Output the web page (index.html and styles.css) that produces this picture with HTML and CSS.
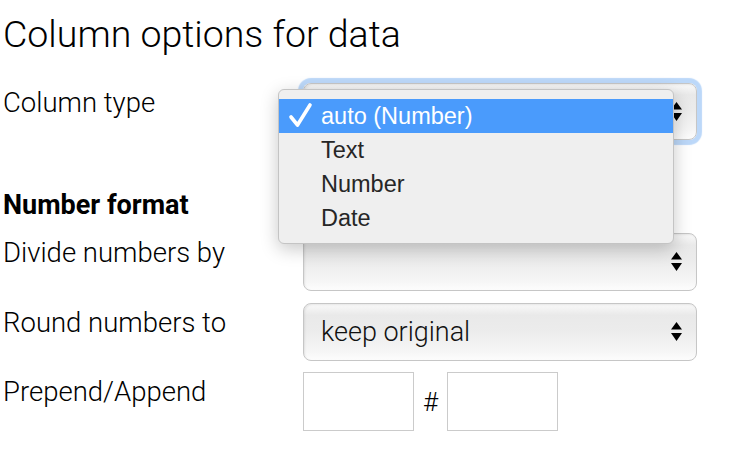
FILE: index.html
```html
<!DOCTYPE html>
<html>
<head>
<meta charset="utf-8">
<link rel="stylesheet" href="styles.css">
</head>
<body>
<div class="page">
  <h1 class="title">Column options for data</h1>
  <div class="row row-type">
    <div class="label">Column type</div>
    <div class="control">
      <div class="select focused">
        <span class="select-text"></span>
        <svg class="arrows" width="11" height="20" viewBox="0 0 11 20"><path d="M5.5 0 L11 7.5 L0 7.5 Z M0 11 L11 11 L5.5 19 Z" fill="#000"/></svg>
      </div>
    </div>
  </div>
  <div class="section">Number format</div>
  <div class="row row-divide">
    <div class="label">Divide numbers by</div>
    <div class="control">
      <div class="select">
        <span class="select-text"></span>
        <svg class="arrows" width="11" height="20" viewBox="0 0 11 20"><path d="M5.5 0 L11 7.5 L0 7.5 Z M0 11 L11 11 L5.5 19 Z" fill="#000"/></svg>
      </div>
    </div>
  </div>
  <div class="row row-round">
    <div class="label">Round numbers to</div>
    <div class="control">
      <div class="select">
        <span class="select-text">keep original</span>
        <svg class="arrows" width="11" height="20" viewBox="0 0 11 20"><path d="M5.5 0 L11 7.5 L0 7.5 Z M0 11 L11 11 L5.5 19 Z" fill="#000"/></svg>
      </div>
    </div>
  </div>
  <div class="row row-affix">
    <div class="label">Prepend/Append</div>
    <div class="control affix">
      <div class="input"></div>
      <span class="hash">#</span>
      <div class="input"></div>
    </div>
  </div>

  <div class="menu">
    <div class="item selected">
      <svg class="check" width="26" height="28" viewBox="0 0 26 28"><path d="M3 15 L9.5 23 L22 3" fill="none" stroke="#fff" stroke-width="3.6" stroke-linecap="round" stroke-linejoin="round"/></svg>
      auto (Number)
    </div>
    <div class="item">Text</div>
    <div class="item">Number</div>
    <div class="item">Date</div>
  </div>
</div>
</body>
</html>
```

FILE: styles.css
```css
* {
  box-sizing: border-box;
}
html, body {
  margin: 0;
  padding: 0;
  background: #fff;
}
body {
  width: 750px;
  height: 454px;
  overflow: hidden;
  font-family: Roboto, "Noto Sans", sans-serif;
  color: #000;
}
.page {
  position: relative;
  padding: 0 0 0 3px;
}
.title {
  margin: 0;
  padding-top: 12px;
  font-size: 37.5px;
  font-weight: 300;
  line-height: 44px;
  height: 70px;
}
.row {
  display: grid;
  grid-template-columns: 300px 394px;
  align-items: start;
}
.label {
  font-size: 27.5px;
  font-weight: 300;
  line-height: 30px;
  padding-top: 5px;
}
.row-type {
  height: 113px;
  padding-top: 13px;
}
.section {
  font-size: 27px;
  font-weight: 700;
  line-height: 30px;
  padding-top: 7px;
  height: 50px;
}
.row-divide { height: 70px; }
.row-round { height: 69px; }
.select {
  height: 58px;
  border: 1px solid #c6c6c6;
  border-radius: 8px;
  background: linear-gradient(#fafafa 0%, #e9e9e9 20%, #ececec 50%, #f6f6f6 85%, #fdfdfd 100%);
  box-shadow: inset 1px 1px 2px rgba(0,0,0,0.08);
  display: flex;
  align-items: center;
  justify-content: space-between;
  padding: 0 14px 0 17px;
}
.select.focused {
  height: 57px;
  box-shadow: 0 0 1px 5px #bcd8f9, inset 1px 1px 2px rgba(0,0,0,0.08);
}
.select-text {
  font-size: 27px;
  font-weight: 300;
  color: #111;
}
.arrows {
  display: block;
}
.affix {
  display: flex;
  align-items: center;
  gap: 8px;
}
.input {
  width: 111px;
  height: 59px;
  border: 1px solid #cbcbcb;
  background: #fff;
}
.hash {
  font-size: 26px;
  font-weight: 300;
  width: 17px;
  text-align: center;
}
.menu {
  position: absolute;
  left: 278px;
  top: 89px;
  width: 396px;
  padding: 9px 0 8px;
  background: #efefef;
  border: 1px solid #c4c4c4;
  border-radius: 6px;
  box-shadow: 0 5px 18px rgba(0,0,0,0.22);
  font-family: "Liberation Sans", Arial, sans-serif;
  font-size: 23.5px;
  color: #262626;
}
.item {
  height: 34px;
  line-height: 34px;
  padding-left: 42px;
  position: relative;
}
.item.selected {
  background: #4a9bfc;
  color: #fff;
}
.check {
  position: absolute;
  left: 9px;
  top: 3px;
}
```
